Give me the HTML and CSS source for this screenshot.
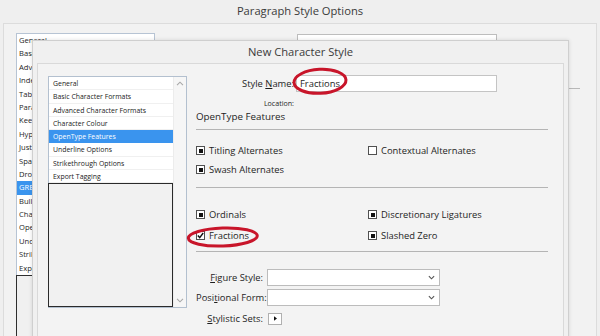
FILE: index.html
```html
<!DOCTYPE html>
<html>
<head>
<meta charset="utf-8">
<link rel="stylesheet" href="styles.css">
</head>
<body>
<div class="screen">
  <div class="back">
    <div class="back-title">Paragraph Style Options</div>
    <div class="back-panel">
      <div class="back-list">
        <div class="bitem">General</div>
        <div class="bitem">Basic Character Formats</div>
        <div class="bitem">Advanced Character Formats</div>
        <div class="bitem">Indents and Spacing</div>
        <div class="bitem">Tabs</div>
        <div class="bitem">Paragraph Rules</div>
        <div class="bitem">Keep Options</div>
        <div class="bitem">Hyphenation</div>
        <div class="bitem">Justification</div>
        <div class="bitem">Span Columns</div>
        <div class="bitem">Drop Caps and Nested Styles</div>
        <div class="bitem sel">GREP Style</div>
        <div class="bitem">Bullets and Numbering</div>
        <div class="bitem">Character Colour</div>
        <div class="bitem">OpenType Features</div>
        <div class="bitem">Underline Options</div>
        <div class="bitem">Strikethrough Options</div>
        <div class="bitem">Export Tagging</div>
        <div class="back-box"></div>
      </div>
      <div class="back-right">
        <div class="back-name">
          <span class="back-label">Style Name:</span>
          <span class="back-input">[Basic Paragraph]</span>
        </div>
        <div class="back-sep"></div>
      </div>
    </div>
  </div>

  <div class="front">
    <div class="front-title">New Character Style</div>
    <div class="front-body">
      <div class="list">
        <div class="list-col">
          <div class="item">General</div>
          <div class="item">Basic Character Formats</div>
          <div class="item">Advanced Character Formats</div>
          <div class="item">Character Colour</div>
          <div class="item sel">OpenType Features</div>
          <div class="item">Underline Options</div>
          <div class="item">Strikethrough Options</div>
          <div class="item">Export Tagging</div>
          <div class="list-box"></div>
        </div>
        <div class="scroll">
          <svg class="arrow" viewBox="0 0 8 5" width="8" height="5"><path d="M1 4.2 L4 1.2 L7 4.2" fill="none" stroke="#a8a8a8" stroke-width="1.1"/></svg>
          <svg class="arrow" viewBox="0 0 8 5" width="8" height="5"><path d="M1 0.8 L4 3.8 L7 0.8" fill="none" stroke="#a8a8a8" stroke-width="1.1"/></svg>
        </div>
      </div>

      <div class="content">
        <div class="name-row">
          <span class="name-label">Style <u>N</u>ame:</span>
          <span class="name-input">Fractions</span>
        </div>
        <div class="location"><span class="name-label small">Location:</span></div>
        <div class="heading">OpenType Features</div>
        <div class="sep"></div>
        <div class="grid g1">
          <div class="cb"><span class="box mixed"></span>Titling Alternates</div>
          <div class="cb"><span class="box"></span>Contextual Alternates</div>
          <div class="cb"><span class="box mixed"></span>Swash Alternates</div>
        </div>
        <div class="sep s2"></div>
        <div class="grid g2">
          <div class="cb"><span class="box mixed"></span>Ordinals</div>
          <div class="cb"><span class="box mixed"></span>Discretionary Ligatures</div>
          <div class="cb"><span class="box checked"><svg viewBox="0 0 7 7" width="7" height="7"><path d="M0.8 3.6 L2.7 5.6 L6.2 1" fill="none" stroke="#111" stroke-width="1.4"/></svg></span>Fractions</div>
          <div class="cb"><span class="box mixed"></span>Slashed Zero</div>
        </div>
        <div class="sep s3"></div>
        <div class="form">
          <div class="frow">
            <span class="flabel"><u>F</u>igure Style:</span>
            <span class="select"><svg viewBox="0 0 8 5" width="7" height="5"><path d="M1 1 L4 4 L7 1" fill="none" stroke="#555" stroke-width="1.3"/></svg></span>
          </div>
          <div class="frow">
            <span class="flabel">Posi<u>t</u>ional Form:</span>
            <span class="select"><svg viewBox="0 0 8 5" width="7" height="5"><path d="M1 1 L4 4 L7 1" fill="none" stroke="#555" stroke-width="1.3"/></svg></span>
          </div>
          <div class="frow small-row">
            <span class="flabel"><u>S</u>tylistic Sets:</span>
            <span class="popbtn"><svg viewBox="0 0 4 6" width="3" height="5"><path d="M0 0 L4 3 L0 6 Z" fill="#111"/></svg></span>
          </div>
        </div>
      </div>
    </div>
  </div>

  <svg class="marks" viewBox="0 0 600 336" width="600" height="336">
    <ellipse cx="320" cy="81.3" rx="26" ry="12" fill="none" stroke="#c8152a" stroke-width="3" transform="rotate(-3 320 81)"/>
    <ellipse cx="222.8" cy="237" rx="34.5" ry="9" fill="none" stroke="#c8152a" stroke-width="3" transform="rotate(-2 222 237)"/>
  </svg>
</div>
</body>
</html>
```

FILE: styles.css
```css
html, body {
  margin: 0;
  padding: 0;
}
body {
  background: #efefef;
}
.screen {
  width: 600px;
  height: 336px;
  position: relative;
  overflow: hidden;
  background: #efefef;
  font-family: "Open Sans", "Noto Sans", sans-serif;
  color: #1e1e1e;
}

/* ---------- back dialog ---------- */
.back {
  display: flex;
  flex-direction: column;
  height: 336px;
}
.back-title {
  height: 23px;
  line-height: 22px;
  text-align: center;
  font-size: 11.2px;
  color: #3a3a3a;
}
.back-panel {
  flex: 1;
  margin: 0 3px;
  border: 1px solid #dcdcdc;
  border-bottom: none;
  background: #f2f2f2;
  display: flex;
  padding: 9px 0 0 12px;
}
.back-list {
  width: 139px;
  display: flex;
  flex-direction: column;
  background: #fff;
  border: 1px solid #b7c4d4;
  border-bottom: none;
  box-sizing: border-box;
}
.bitem {
  height: 13.4px;
  line-height: 13.4px;
  font-size: 7.6px;
  padding-left: 2px;
  white-space: nowrap;
  overflow: hidden;
}
.bitem.sel {
  background: #3a94ee;
  color: #fff;
}
.back-box {
  flex: 1;
  border-left: 1px solid #2e2e2e;
  border-top: 1px solid #2e2e2e;
  background: #f0f0f0;
  margin-left: -1px;
}
.back-right {
  margin-left: 40px;
  padding-top: 1px;
  display: flex;
  flex-direction: column;
}
.back-name {
  display: flex;
  align-items: flex-start;
  height: 18px;
}
.back-label {
  width: 98px;
  text-align: right;
  font-size: 9.4px;
  margin-right: 4px;
  padding-top: 6px;
  color: #444;
}
.back-input {
  width: 200px;
  height: 18px;
  box-sizing: border-box;
  border: 1px solid #bdbdbd;
  background: #fff;
  font-size: 9px;
  line-height: 16px;
  padding: 4px 0 0 3px;
  color: #444;
}
.back-sep {
  margin-top: 36px;
  width: 385px;
  height: 1px;
  background: #b8b8b8;
}

/* ---------- front dialog (overlay) ---------- */
.front {
  position: absolute;
  left: 32px;
  top: 40px;
  width: 537px;
  height: 300px;
  box-sizing: border-box;
  border: 1px solid #cfcfcf;
  border-bottom: none;
  background: #f0f0f0;
  box-shadow: 0 0 4px rgba(0, 0, 0, 0.12);
  display: flex;
  flex-direction: column;
}
.front-title {
  height: 22px;
  line-height: 21px;
  text-align: center;
  font-size: 11.2px;
  color: #3a3a3a;
}
.front-body {
  flex: 1;
  margin: 0 4px;
  border: 1px solid #d9d9d9;
  border-bottom: none;
  background: #f3f3f3;
  display: flex;
  align-items: flex-start;
  padding: 12px 0 0 10px;
  gap: 9px;
}

.list {
  width: 139px;
  height: 232px;
  box-sizing: border-box;
  border: 1px solid #b3c0cf;
  background: #fff;
  display: flex;
}
.list-col {
  width: 124px;
  display: flex;
  flex-direction: column;
}
.item {
  height: 13.3px;
  line-height: 13.3px;
  font-size: 6.9px;
  padding-left: 4px;
  box-sizing: border-box;
  border-bottom: 1px solid #f0f0f0;
  white-space: nowrap;
  color: #222;
}
.item.sel {
  background: #3a94ee;
  color: #fff;
  border-bottom-color: #3a94ee;
}
.list-box {
  flex: 1;
  border: 1px solid #2b2b2b;
  background: #f1f1f1;
  margin-left: -1px;
}
.scroll {
  flex: 1;
  background: #f6f6f6;
  border-left: 1px solid #ececec;
  display: flex;
  flex-direction: column;
  justify-content: space-between;
  align-items: center;
  padding: 4px 0 4px;
}
.arrow {
  display: block;
}

.content {
  width: 352px;
  margin-top: -1px;
  display: flex;
  flex-direction: column;
  font-size: 9.4px;
}
.name-row {
  display: flex;
  align-items: center;
  height: 17px;
}
.name-label {
  width: 98px;
  text-align: right;
  margin-right: 2px;
  white-space: nowrap;
}
.name-label.small {
  display: inline-block;
  font-size: 7.1px;
}
.name-input {
  width: 201px;
  height: 17px;
  box-sizing: border-box;
  border: 1px solid #c4c4c4;
  background: #fff;
  line-height: 15px;
  padding-left: 3px;
  font-size: 9.4px;
}
.location {
  margin-top: 4px;
  height: 14px;
  line-height: 14px;
}
.heading {
  height: 14px;
  line-height: 14px;
  font-size: 9.8px;
}
.sep {
  margin-top: 5px;
  height: 1px;
  background: #b4b4b4;
}
.sep.s2 {
  margin-top: 8px;
}
.sep.s3 {
  margin-top: 5px;
}
.grid {
  display: grid;
  grid-template-columns: 172px 1fr;
}
.g1 {
  margin-top: 11px;
}
.g1 .cb {
  height: 19px;
}
.g2 {
  margin-top: 16px;
}
.g2 .cb {
  height: 21px;
}
.cb {
  display: flex;
  align-items: center;
  white-space: nowrap;
}
.box {
  width: 9px;
  height: 9px;
  box-sizing: border-box;
  border: 1px solid #505050;
  background: #fff;
  margin-right: 4px;
  display: flex;
  align-items: center;
  justify-content: center;
  flex: none;
}
.box.mixed::after {
  content: "";
  width: 4px;
  height: 4px;
  background: #111;
}
.box svg {
  display: block;
}

.form {
  margin-top: 17px;
  display: flex;
  flex-direction: column;
  gap: 3px;
}
.frow {
  display: flex;
  align-items: center;
  height: 17px;
}
.frow.small-row {
  margin-top: 3px;
  height: 13px;
}
.flabel {
  width: 67px;
  text-align: right;
  margin-right: 4px;
  white-space: nowrap;
}
.select {
  width: 173px;
  height: 17px;
  box-sizing: border-box;
  border: 1px solid #bcbcbc;
  background: #fff;
  display: flex;
  align-items: center;
  justify-content: flex-end;
  padding-right: 4px;
}
.select svg {
  display: block;
}
.popbtn {
  width: 14px;
  height: 12px;
  box-sizing: border-box;
  border: 1px solid #b0b0b0;
  background: #fff;
  margin-left: 1px;
  display: flex;
  align-items: center;
  justify-content: center;
}
.popbtn svg {
  display: block;
}

.marks {
  position: absolute;
  left: 0;
  top: 0;
  pointer-events: none;
}
```
